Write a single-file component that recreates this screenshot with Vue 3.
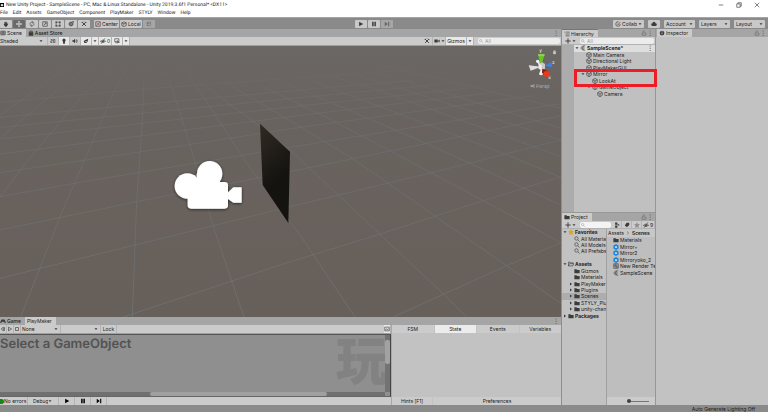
<script setup>
import { h, ref } from 'vue'

const glyphs = {
  logo: { f: 'M0 0h16v16H0z', w: 'M8 3l5 3v5l-5 3-5-3V6z' },
  hand: { f: 'M4 8L3 4l2-1 1 4V2h2v5l1-5 2 .5L10.500 8 13 6l1 1-3 6-2 2H6l-3-4-1-3z' },
  move: { s: 'M8 1v14M1 8h14M6 3l2-2 2 2M6 13l2 2 2-2M3 6L1 8l2 2M13 6l2 2-2 2' },
  rotate: { s: 'M3 10a5.500 5.500 0 0 1 8-6.500M13 6a5.500 5.500 0 0 1-8 6.500M9 1l3 3-3 2M7 15l-3-3 3-2' },
  scale: { s: 'M2 2h12v12H2zM5 11l5-5M7 5h4v4' },
  rect: { s: 'M3 3h10v10H3zM1 3h4M3 1v4M11 3h4M13 1v4M1 13h4M3 11v4M11 13h4M13 11v4' },
  transform: { s: 'M8 1v14M1 8h14M4 4h8v8H4zM11 1h4v4' },
  tools: { s: 'M3 3l10 10M13 3L3 13M2 5l3-3M11 2l3 3', bold: 1 },
  pivot: { s: 'M2 2h12v12H2z', r: 'M3 13L13 3M5 5l6 6' },
  local: { s: 'M2 5l6-3 6 3v7l-6 3-6-3zM2 5l6 3 6-3', r: 'M3 14L13 2' },
  snap: { s: 'M3 3h9v6M3 3v9h5M3 7h6', r: 'M9 10l5 4M14 9l-5 5' },
  play: { f: 'M3 2l11 6-11 6z' },
  pause: { f: 'M3 2h4v12H3zM9 2h4v12H9z' },
  step: { f: 'M2 2l8 6-8 6zM11 2h3v12h-3z' },
  back: { s: 'M9 3L3 8l6 5zM12 3v10' },
  fwd: { s: 'M4 3l8 5-8 5z' },
  stop: { s: 'M4 4h8v8H4z' },
  collab: { s: 'M14 8a6 6 0 1 1-4-5.600M6 7l2 3 6-7' },
  cloud: { f: 'M4 13a3.500 3.500 0 0 1 0-7 4 4 0 0 1 8 0 3.500 3.500 0 0 1 0 7z' },
  caret: { f: 'M2 5h12l-6 7z' },
  right: { f: 'M4 2l8 6-8 6z' },
  grid: { s: 'M2 3h12v10H2zM2 8h12M6 3v10M10 3v10' },
  shop: { f: 'M2 6h12v9H2zM4 6V2h8v4h-2V4H6v2z' },
  two: { s: 'M2 4h4v4H2v4h4M9 4h4v8H9z' },
  bulb: { f: 'M8 1a5 5 0 0 1 2.500 9v5h-5v-5A5 5 0 0 1 8 1z' },
  sound: { f: 'M1 6h3l4-4v12l-4-4H1z', s: 'M10 5q3 3 0 6M12 3q4 5 0 10' },
  fx: { f: 'M2 8q4-4 9-5l3-1-2 8q-4 6-9 2z', w: 'M6 8h4v2H6z' },
  eye: { s: 'M1 9q7-8 14 0-7 6-14 0M3 15L13 1', f: 'M6 7h4v4H6z' },
  layers: { s: 'M2 2h11v8H2zM9 7v7l2-2h3zM5 10v4' },
  cam: { f: 'M1 4h9v8H1zM10 8l5-4v8z' },
  search: { s: 'M10.500 10.500L15 15M2 6.500a4.500 4.500 0 1 0 9 0a4.500 4.500 0 1 0-9 0' },
  list: { s: 'M1 3h3M6 3h9M4 8h11M4 13h11' },
  info: { f: 'M8 1l2 2 3 0 0 3 2 2-2 2v3h-3l-2 2-2-2H3v-3L1 8l2-2V3h3z', w: 'M7 7h2v4H7zM7 4h2v2H7z' },
  lock: { s: 'M5 7V4q3-4 6 0M3 8h10v6H3z' },
  dots: { f: 'M7 1h3v3H7zM7 7h3v3H7zM7 13h3v3H7z' },
  plus: { s: 'M8 1v14M1 8h14', bold: 1 },
  cube: { s: 'M8 1l6 3.500v7L8 15l-6-3.500v-7zM2 4.500L8 8l6-3.500M8 8v7' },
  prefab: { b: 'M8 0l7 4v8l-7 4-7-4V4z', w: 'M8 5l3 2v2l-3 2-3-2V7z' },
  unity: { s: 'M14 2L6 3 2 8l4 5 8 1M6 8h7M6 8l4-5M6 8l4 5' },
  folder: { f: 'M1 3h6l1 2h7v9H1z' },
  open: { s: 'M1 13V3h5l2 2h6v2M1 13l3-6h11l-2 6z' },
  star: { y: 'M8 0l2.400 5.500 5.600.5-4.200 4L13 16l-5-3-5 3 1.200-6L0 6l5.600-.5z' },
  starGrey: { g: 'M8 0l2.400 5.500 5.600.5-4.200 4L13 16l-5-3-5 3 1.200-6L0 6l5.600-.5z' },
  texture: { s: 'M2 2h12v12H2zM2 8h12M8 2v12', l: 'M3 3h5v5H3zM8 9h5v4H8z' },
  shapes: { f: 'M3 1h6v6H3zM8 8l5-3 2 5zM3 9h6v6H3z' },
  tag: { f: 'M2 9l5-7h7v6l-6 6z' },
  pad: { f: 'M4 4h8l4 8-3 1-3-3H6l-3 3-3-1z' },
  image: { s: 'M2 3h12v10H2zM4 11l3-4 3 3 2-3' },
  chevron: { s: 'M4 2l7 6-7 6' },
  min: { s: 'M2 8h12' },
  restore: { s: 'M2 5h9v9H2zM5 5V2h9v9h-3' },
  close: { s: 'M2 2l12 12M14 2L2 14' },
}
const fills = { f: 'currentColor', b: '#1c84dc', w: '#ddd', y: '#e0a317', g: '#8f8f8f', l: '#62a3d6' }

const Icon = ({ name }) => {
  const g = glyphs[name]
  const kids = []
  for (const k of ['b', 'y', 'g', 'l', 'f', 'w']) {
    if (g[k]) kids.push(h('path', { d: g[k], fill: fills[k] }))
  }
  if (g.s) kids.push(h('path', { d: g.s, fill: 'none', stroke: 'currentColor', 'stroke-width': g.bold ? 2.5 : 1.7 }))
  if (g.r) kids.push(h('path', { d: g.r, fill: 'none', stroke: '#d8434a', 'stroke-width': 2 }))
  return h('svg', { viewBox: '0 0 16 16', class: 'ico', 'aria-hidden': 'true' }, kids)
}
Icon.props = ['name']

const menus = ['File', 'Edit', 'Assets', 'GameObject', 'Component', 'PlayMaker', 'STYLY', 'Window', 'Help']
const tools = ['hand', 'move', 'rotate', 'scale', 'rect', 'transform', 'tools']
const tool = ref('move')
const dropdowns = ['Account', 'Layers', 'Layout']

const hierarchy = [
  { t: 'Main Camera', d: 1 },
  { t: 'Directional Light', d: 1 },
  { t: 'PlayMakerGUI', d: 1 },
  { t: 'Mirror', d: 1, open: true },
  { t: 'LookAt', d: 2 },
  { t: 'GameObject', d: 2, open: true },
  { t: 'Camera', d: 3 },
]
const project = [
  { t: 'Favorites', i: 'star', a: 'caret', b: true },
  { t: 'All Materia', i: 'search', d: 1 },
  { t: 'All Models', i: 'search', d: 1 },
  { t: 'All Prefabs', i: 'search', d: 1 },
  null,
  { t: 'Assets', i: 'open', a: 'caret', b: true },
  { t: 'Gizmos', i: 'folder', d: 1 },
  { t: 'Materials', i: 'folder', d: 1 },
  { t: 'PlayMaker', i: 'folder', a: 'right', d: 1 },
  { t: 'Plugins', i: 'folder', a: 'right', d: 1 },
  { t: 'Scenes', i: 'folder', a: 'right', d: 1, on: true },
  { t: 'STYLY_Plu', i: 'folder', a: 'right', d: 1 },
  { t: 'unity-chan', i: 'folder', a: 'right', d: 1 },
  { t: 'Packages', i: 'folder', a: 'right', b: true },
]
const files = [
  { t: 'Materials', i: 'folder' },
  { t: 'Mirror+', i: 'prefab' },
  { t: 'Mirror2', i: 'prefab' },
  { t: 'Mirroryoko_2', i: 'prefab' },
  { t: 'New Render Te', i: 'texture' },
  { t: 'SampleScene', i: 'unity' },
]
const fsmTabs = ['FSM', 'State', 'Events', 'Variables']
const fsmTab = ref('State')

const gridLines = [
  '0,172 430,132 900,98 1230,75',
  '0,217 900,135 1240,106',
  '0,247 900,158 1320,118',
  '0,282 900,183 1400,130',
  '0,327 900,211 1480,142',
  '0,383 560,300 900,247 1600,152',
  '0,455 240,412 900,302 1683,176',
  '0,555 410,470 870,380 1683,212',
  '0,700 405,600 870,485 1295,383 1683,285',
  '370,816 840,660 1140,567 1450,467 1683,395',
  '1180,816 1520,662 1683,593',
  '520,20 590,125 740,355 900,570 1065,816',
  '500,80 570,300 640,545 732,816',
  '433,50 430,170 420,325 410,470 397,816',
  '392,40 340,145 180,515 62,816',
  '330,70 240,160 85,345 0,455',
  '270,60 190,120 0,280',
  '210,60 120,125 0,210',
  '570,90 760,230 870,315 1015,450 1330,747 1400,816',
  '690,120 850,215 1060,342 1305,513 1520,662 1683,775',
  '780,120 985,220 1175,320 1450,467 1683,593',
  '860,115 1010,180 1290,300 1572,430 1683,480',
  '930,105 1140,185 1510,325 1683,397',
  '1000,95 1120,130 1683,335',
  '1070,90 1170,120 1683,285',
  '1140,85 1240,115 1683,250',
  '1010,30 1230,80 1683,190',
]
</script>

<template>
  <div class="editor">
    <header class="title">
      <Icon name="logo" />
      <h1>New Unity Project - SampleScene - PC, Mac &amp; Linux Standalone - Unity 2019.3.6f1 Personal* &lt;DX11&gt;</h1>
      <div class="wins">
        <button aria-label="Minimize"><Icon name="min" /></button>
        <button aria-label="Restore"><Icon name="restore" /></button>
        <button aria-label="Close"><Icon name="close" /></button>
      </div>
    </header>
    <nav class="menu">
      <a v-for="m in menus" :key="m" href="#">{{ m }}</a>
    </nav>

    <div class="toolbar">
      <div class="side">
        <div class="group">
          <button v-for="t in tools" :key="t" :aria-label="t" :class="{ on: tool === t }" @click="tool = t"><Icon :name="t" /></button>
        </div>
        <div class="group">
          <button class="wide"><Icon name="pivot" />Center</button>
          <button class="wide"><Icon name="local" />Local</button>
          <button class="dim" aria-label="Snap"><Icon name="snap" /></button>
        </div>
      </div>
      <div class="group play">
        <button aria-label="Play"><Icon name="play" /></button>
        <button aria-label="Pause"><Icon name="pause" /></button>
        <button class="dim" aria-label="Step"><Icon name="step" /></button>
      </div>
      <div class="side end">
        <button class="drop"><Icon name="collab" />Collab<Icon name="caret" class="arrow" /></button>
        <button aria-label="Services"><Icon name="cloud" /></button>
        <label v-for="d in dropdowns" :key="d" class="drop">
          <select :aria-label="d"><option>{{ d }}</option></select><Icon name="caret" class="arrow" />
        </label>
      </div>
    </div>

    <main class="work">
      <section class="left">
        <div class="tabs">
          <button class="tab on"><Icon name="grid" />Scene</button>
          <button class="tab bold"><Icon name="shop" />Asset Store</button>
          <Icon name="dots" class="last" />
        </div>
        <div class="bar">
          <label class="pick shade"><select aria-label="Draw mode"><option>Shaded</option></select><Icon name="caret" class="arrow" /></label>
          <button aria-label="2D"><Icon name="two" /></button>
          <button class="lit" aria-label="Lighting"><Icon name="bulb" /></button>
          <button aria-label="Audio"><Icon name="sound" /></button>
          <button class="lit" aria-label="Effects"><Icon name="fx" /></button>
          <button class="lit slim" aria-label="Effects menu"><Icon name="caret" class="arrow" /></button>
          <button class="lit hid"><Icon name="eye" />0</button>
          <button class="lit" aria-label="Grid"><Icon name="layers" /></button>
          <button class="lit slim" aria-label="Grid menu"><Icon name="caret" class="arrow" /></button>
          <span class="fill"></span>
          <button aria-label="Tool settings"><Icon name="tools" /></button>
          <button class="hid" aria-label="Scene camera"><Icon name="cam" /><Icon name="caret" class="arrow" /></button>
          <button class="lit giz">Gizmos</button>
          <button class="lit slim" aria-label="Gizmos menu"><Icon name="caret" class="arrow" /></button>
          <label class="find"><Icon name="search" /><input aria-label="Search scene" placeholder="All" /></label>
        </div>

        <div class="scene">
          <svg viewBox="0 3 1683 813" preserveAspectRatio="xMidYMid slice" role="img" aria-label="Scene view">
            <defs>
              <linearGradient id="sky" x1="0" y1="0" x2="0" y2="1">
                <stop offset="0" stop-color="#6b6764" /><stop offset=".25" stop-color="#69635f" /><stop offset="1" stop-color="#675f5a" />
              </linearGradient>
              <linearGradient id="fade" x1="0" y1="0" x2="0" y2="1">
                <stop offset="0" stop-color="#fff" stop-opacity=".05" /><stop offset=".2" stop-color="#fff" stop-opacity=".6" /><stop offset="1" stop-color="#fff" />
              </linearGradient>
              <mask id="far" maskUnits="userSpaceOnUse" x="0" y="0" width="1683" height="820"><rect y="20" width="1683" height="800" fill="url(#fade)" /></mask>
              <linearGradient id="glass" x1="0" y1="0" x2=".3" y2="1">
                <stop offset="0" stop-color="#302b24" /><stop offset=".7" stop-color="#15130f" />
              </linearGradient>
              <filter id="soft" x="-20%" y="-20%" width="140%" height="140%"><feDropShadow dx="0" dy="2" stdDeviation="5" flood-color="#000" flood-opacity=".65" /></filter>
            </defs>
            <rect width="1683" height="820" fill="url(#sky)" />
            <g mask="url(#far)" fill="none" stroke="#70777b" stroke-opacity=".8" stroke-width="2.5">
              <polyline v-for="p in gridLines" :key="p" :points="p" />
            </g>
            <path d="M780 236L870 320 865 534 788 420z" fill="url(#glass)" />
            <g fill="#fff" filter="url(#soft)">
              <circle cx="629" cy="386" r="38" /><circle cx="562" cy="423" r="38" />
              <rect x="563" y="411" width="121" height="80" rx="10" />
              <path d="M590 386h70v40h-70zM680 446l20-19h25v46h-25l-20-14z" />
            </g>
            <g>
              <path d="M1624 65l-38-4 6 16z" fill="#dedede" />
              <path d="M1624 68l-16-20 8-4z" fill="#eee" />
              <circle cx="1613" cy="49" r="5" fill="#eee" />
              <path d="M1614 28h20l-8 26h-5z" fill="#6cc52c" /><path d="M1614 28h20l-1 4h-18z" fill="#8ae04a" />
              <path d="M1632 62l22-10 3 14z" fill="#3b82ee" />
              <path d="M1616 56l11-4 8 5v14l-10 5-9-5z" fill="#c9c9c9" />
              <path d="M1616 56l9 4v16l-9-5z" fill="#efefef" />
              <path d="M1622 74l-5 14q6 6 12 0l-3-14z" fill="#f2f2f2" />
              <path d="M1627 71l-1 12 12 12 6-17z" fill="#8c1d10" />
              <ellipse cx="1640" cy="87" rx="10" ry="9" fill="#e83a1c" />
              <path d="M1660 21h7v6h-7z M1661 21v-4h5v4" fill="#ccc" stroke="#ccc" />
              <path d="M1604 119l-12 4 12 4M1604 123h-12" fill="none" stroke="#b8b4b0" stroke-width="2" />
            </g>
            <g class="axis">
              <text x="1618" y="22">y</text><text x="1656" y="58">z</text><text x="1645" y="102">x</text>
              <text x="1608" y="128" class="persp">Persp</text>
            </g>
          </svg>
        </div>

        <div class="tabs">
          <button class="tab bold"><Icon name="pad" />Game</button>
          <button class="tab on">PlayMaker</button>
          <Icon name="dots" class="last" />
        </div>
        <div class="maker">
          <div class="graph">
            <div class="bar">
              <button class="tiny" aria-label="Previous"><Icon name="back" /></button>
              <button class="tiny" aria-label="Next"><Icon name="fwd" /></button>
              <button class="tiny" aria-label="Recent"><Icon name="stop" /></button>
              <label class="pick"><select aria-label="Object"><option>None</option></select><Icon name="caret" class="arrow" /></label>
              <label class="pick"><select aria-label="FSM"><option></option></select><Icon name="caret" class="arrow" /></label>
              <button class="keep">Lock</button>
              <span class="fill"></span>
              <button class="lit tiny" aria-label="Minimap"><Icon name="image" /></button>
            </div>
            <div class="canvas">
              <div class="paper"><h2>Select a GameObject</h2><span class="mark" lang="ja">玩</span></div>
              <div class="vscroll"><i></i></div>
              <div class="hscroll"><i></i></div>
            </div>
            <div class="bar">
              <span class="state"><i></i>No errors</span>
              <label class="pick debug"><select aria-label="Debug"><option>Debug</option></select><Icon name="caret" class="arrow" /></label>
              <button class="run" aria-label="Run"><Icon name="play" /></button>
              <button class="run" aria-label="Hold"><Icon name="pause" /></button>
              <button class="run" aria-label="Next frame"><Icon name="step" /></button>
            </div>
          </div>
          <div class="fsm">
            <div class="four">
              <button v-for="t in fsmTabs" :key="t" :class="{ on: fsmTab === t }" @click="fsmTab = t">{{ t }}</button>
            </div>
            <div class="fill"></div>
            <div class="foot"><button>Hints [F1]</button><button>Preferences</button></div>
          </div>
        </div>
      </section>

      <section class="mid">
        <div class="hier">
          <div class="tabs">
            <button class="tab on focus"><Icon name="list" />Hierarchy</button>
            <Icon name="lock" class="last" /><Icon name="dots" />
          </div>
          <div class="bar add">
            <button class="plus" aria-label="Create"><Icon name="plus" /><Icon name="caret" class="arrow" /></button>
            <label class="find"><Icon name="search" /><input aria-label="Search hierarchy" placeholder="All" /></label>
          </div>
          <div class="tree">
            <ul>
              <li class="root"><Icon name="caret" class="arrow" /><Icon name="unity" /><b>SampleScene*</b><Icon name="dots" class="last" /></li>
              <li v-for="n in hierarchy" :key="n.t" :class="'d' + n.d">
                <Icon name="caret" class="arrow" :class="{ none: !n.open }" /><Icon name="cube" />{{ n.t }}
              </li>
            </ul>
          </div>
          <div class="callout"></div>
        </div>
        <div class="proj">
          <div class="tabs">
            <button class="tab on"><Icon name="folder" />Project</button>
            <Icon name="lock" class="last" /><Icon name="dots" />
          </div>
          <div class="bar add">
            <button class="plus" aria-label="Create asset"><Icon name="plus" /><Icon name="caret" class="arrow" /></button>
            <label class="find"><Icon name="search" /><input aria-label="Search project" /></label>
            <button class="tiny" aria-label="By type"><Icon name="shapes" /></button>
            <button class="tiny" aria-label="By label"><Icon name="tag" /></button>
            <button class="tiny" aria-label="Save search"><Icon name="starGrey" /></button>
            <button class="hid"><Icon name="eye" />9</button>
          </div>
          <div class="panes">
            <ul class="dirs">
              <li v-for="(n, i) in project" :key="i" :class="n && ['p' + (n.d || 0), { on: n.on, heavy: n.b }]">
                <template v-if="n">
                  <Icon :name="n.a || 'caret'" class="arrow" :class="{ none: !n.a }" /><Icon :name="n.i" />{{ n.t }}
                </template>
              </li>
            </ul>
            <div class="items">
              <p class="crumb"><a href="#">Assets</a><Icon name="chevron" class="arrow" /><b>Scenes</b></p>
              <ul>
                <li v-for="f in files" :key="f.t"><Icon :name="f.i" />{{ f.t }}</li>
              </ul>
              <div class="size"><input type="range" min="0" max="100" value="0" aria-label="Icon size" /></div>
            </div>
          </div>
        </div>
      </section>

      <section class="insp">
        <div class="tabs">
          <button class="tab on"><Icon name="info" />Inspector</button>
          <Icon name="lock" class="last" /><Icon name="dots" />
        </div>
      </section>
    </main>
    <footer class="status">Auto Generate Lighting Off</footer>
  </div>
</template>

<style>
body { margin: 0; overflow: hidden; }
</style>

<style scoped>
* { box-sizing: border-box; }
.editor { display: flex; flex-direction: column; height: 100vh; font: 5px/6px Inter, "Liberation Sans", sans-serif; color: #1c1c1c; background: #8a8a8a; overflow: hidden; }
button, select, input { font: inherit; color: inherit; margin: 0; padding: 0; border: 0; background: none; border-radius: 0; }
select { appearance: none; outline: 0; flex: 1; min-width: 0; height: 8px; }
h1, h2, p, ul { margin: 0; padding: 0; }
ul { list-style: none; }
a { color: inherit; text-decoration: none; }
button { display: flex; align-items: center; justify-content: center; gap: 1px; white-space: nowrap; }
.ico { width: 6px; height: 6px; flex: none; display: block; color: #3c3c3c; }
.ico.arrow { width: 4px; height: 4px; }
.none { visibility: hidden; }
.fill { flex: 1; }

.title { display: flex; align-items: center; height: 10px; background: #fff; gap: 2px; flex: none; }
.title h1 { font: 400 5px/8px Roboto, sans-serif; flex: 1; white-space: nowrap; text-rendering: geometricPrecision; }
.title > .ico { width: 4px; color: #000; }
.wins { display: flex; gap: 12px; padding-right: 8px; }
.menu { display: flex; gap: 5px; height: 7px; background: #fff; flex: none; font: 5px/7px Roboto, sans-serif; text-rendering: geometricPrecision; }

.toolbar { display: grid; grid-template-columns: 1fr auto 1fr; align-items: center; height: 12px; flex: none; background: #8a8a8a; border-top: 1px solid #a4a4a4; }
.toolbar button, .drop { height: 8px; min-width: 12px; background: #c8c8c8; border-radius: 1px; }
.side, .group { display: flex; gap: 1px; }
.group.play { margin-right: 21px; }
.side { gap: 4px; }
.side.end { justify-content: flex-end; padding-right: 3px; }
.toolbar button.on { background: #6a6a6a; }
.toolbar button.on .ico { color: #fff; }
.toolbar button.dim { background: #a6a6a6; }
.toolbar button.dim .ico { opacity: .6; }
.toolbar button.wide { padding: 0 1px; }
.drop { display: flex; align-items: center; width: 31px; padding: 0 2px; }

.work { flex: 1; min-height: 0; display: grid; grid-template-columns: minmax(0, 1fr) 95px 112px; }
.left, .mid, .insp, .hier, .proj, .graph, .fsm { display: flex; flex-direction: column; min-width: 0; min-height: 0; }
.tabs { display: flex; align-items: center; height: 8px; flex: none; background: #a5a5a5; padding-right: 2px; }
.tab { height: 8px; padding: 0 4px 0 2px; gap: 1px; }
.tab.on { background: #cbcbcb; }
.tab.bold { font-weight: 500; }
.tab.focus { border-top: 1px solid #4c7eb8; }
.left .tab:first-child { padding-left: 0; }
.tabs .ico.last { margin-left: auto; }
.tabs .ico.last, .tabs > .ico { color: #6d6d6d; }
.bar { display: flex; height: 9px; flex: none; background: #cbcbcb; border-bottom: 1px solid #a0a0a0; align-items: stretch; }
.bar button { min-width: 11px; border-right: 1px solid #b4b4b4; }
.bar button.tiny { min-width: 7px; }
.bar button.lit { background: #e8e8e8; }
.bar button.slim { min-width: 7px; }
.bar button.hid { min-width: 13px; }
.bar button.giz { min-width: 21px; }
.bar button.keep { min-width: 16px; }
.pick { display: flex; align-items: center; width: 40px; border-right: 1px solid #b4b4b4; padding: 0 2px 0 1px; }
.pick.shade { width: 48px; padding: 0 4px 0 0; }
.find { display: flex; align-items: center; flex: none; width: 82px; min-width: 0; height: 6px; margin: 1px 1px 1px 4px; background: #ececec; border-radius: 2px; padding-left: 1px; }
.find .ico { width: 4px; height: 4px; color: #8a8a8a; }
.find input { width: 0; min-width: 0; flex: 1; height: 6px; outline: 0; padding-left: 2px; }
.find input::placeholder { color: #9a9a9a; opacity: 1; }

.scene { flex: 1; min-height: 0; overflow: hidden; background: #68605b; }
.scene svg { display: block; width: 100%; height: 100%; }
.axis text { font: 600 14px Inter, sans-serif; fill: #ddd; text-rendering: geometricPrecision; }
.axis .persp { font-weight: 400; font-size: 15px; fill: #b8b4b0; }

.maker { display: grid; grid-template-columns: minmax(0, 1fr) 170px; height: 80px; flex: none; background: #c2c2c2; }
.canvas { flex: 1; min-height: 0; display: grid; grid-template: minmax(0, 1fr) 4px / minmax(0, 1fr) 5px; background: #8f8f8f; border-top: 1px solid #555; border-right: 1px solid #444; border-bottom: 1px solid #666; }
.paper { display: flex; justify-content: space-between; overflow: hidden; }
.paper h2 { font: 600 13px/18px Inter, sans-serif; color: #535353; white-space: nowrap; text-rendering: geometricPrecision; }
.mark { font: 900 52px/46px "Noto Sans CJK JP", sans-serif; color: #828282; margin-right: -3px; }
.vscroll { background: #737373; padding-top: 5px; z-index: 1; }
.vscroll i { display: block; height: 24px; background: #a2a2a2; border-radius: 2px; }
.hscroll { background: #707070; padding: 0 15% 0 39%; }
.hscroll i { display: block; height: 4px; background: #a0a0a0; border-radius: 2px; }
.graph > .bar:last-child { height: 8px; border: 0; }
.state { display: flex; align-items: center; width: 28px; border-right: 1px solid #b4b4b4; white-space: nowrap; }
.state i { width: 4px; height: 5px; background: #128a12; border-radius: 0 3px 3px 0; flex: none; }
.pick.debug { width: 31px; padding: 0 6px 0 5px; }
.bar button.run { min-width: 16px; }
.run .ico { color: #000; }
.fsm { border-left: 1px solid #a8a8a8; }
.four { display: grid; grid-template-columns: repeat(4, 1fr); height: 8px; gap: 1px; }
.four button, .foot button { background: #cbcbcb; }
.four button.on { background: #ececec; }
.foot { display: grid; grid-template-columns: 40px 1fr; height: 8px; gap: 1px; }

.mid { border-left: 1px solid #8e8e8e; border-right: 1px solid #969696; background: #c2c2c2; }
.hier { flex: 1; position: relative; }
.tree { flex: 1; background: #c0c0c0; border-left: 12px solid #acacac; }
.tree ul { display: grid; grid-auto-rows: 1fr; height: 52px; }
li { display: flex; align-items: center; gap: 1px; white-space: nowrap; overflow: hidden; min-height: 0; }
.tree li { padding-left: 7px; }
.tree .root { background: #dedede; padding: 0 2px 0 1px; }
.tree .root .last { margin-left: auto; color: #777; }
.tree .d2 { padding-left: 13px; }
.tree .d3 { padding-left: 18px; }
.callout { position: absolute; left: 12px; right: -2px; top: 40px; height: 18px; border: 3px solid #ee1c25; }
.bar.add { height: 8px; border-bottom-color: #b2b2b2; }
.bar button.plus { width: 14px; margin-left: 1px; border: 0; }
.hier .find, .proj .find { width: auto; flex: 1; margin-left: 3px; }
.proj { height: 193px; flex: none; border-top: 1px solid #989898; }
.proj .find { background: #f4f4f4; }
.proj .bar button.tiny { min-width: 10px; }
.panes { flex: 1; min-height: 0; display: grid; grid-template-columns: 44px minmax(0, 1fr); }
.dirs { display: grid; grid-auto-rows: 1fr; height: 90px; min-width: 0; }
.dirs li { padding-left: 1px; min-width: 0; }
.dirs li.p1 { padding-left: 7px; }
.dirs .on { background: #adadad; }
.dirs .heavy { font-weight: 700; }
.items { display: flex; flex-direction: column; min-width: 0; border-left: 1px solid #a0a0a0; background: #bebebe; }
.crumb { display: flex; align-items: center; gap: 2px; height: 8px; background: #c8c8c8; padding-left: 1px; }
.crumb b { font-weight: 600; }
.items ul { display: grid; grid-auto-rows: 1fr; height: 39px; padding-left: 6px; }
.size { margin-top: auto; height: 8px; background: #cbcbcb; display: flex; align-items: center; padding: 0 6px 0 20px; }
.size input { appearance: none; width: 100%; height: 1px; background: #777; }
.size input::-webkit-slider-thumb { appearance: none; width: 4px; height: 4px; border-radius: 50%; background: #444; }
.insp { background: #c2c2c2; }
.insp .tabs { padding-left: 1px; }
.status { flex: none; height: 7px; padding: 1px 13px 0 0; text-align: right; overflow: hidden; background: #8a8a8a; }
</style>
